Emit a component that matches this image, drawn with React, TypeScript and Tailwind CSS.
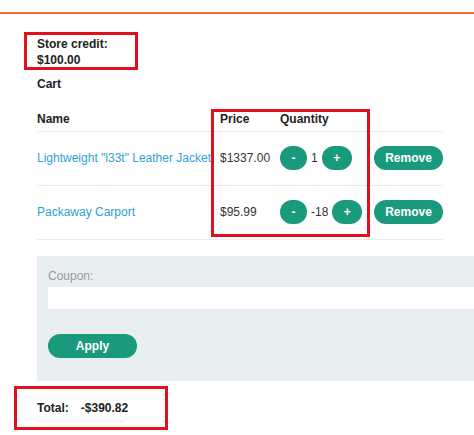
import React from 'react'

const items = [
  { name: 'Lightweight "l33t" Leather Jacket', price: '$1337.00', qty: '1' },
  { name: 'Packaway Carport', price: '$95.99', qty: '-18' },
]

const GreenButton = ({ label, className }: { label: string; className: string }) => (
  <button className={`h-[24px] rounded-full bg-[#1a9a7c] text-[12px] font-bold leading-none text-white ${className}`}>
    {label}
  </button>
)

export default function App() {
  return (
    <div
      className="relative h-[435px] w-[474px] overflow-hidden bg-white text-[12px] text-[#333]"
      style={{ fontFamily: '"Liberation Sans", Arial, sans-serif' }}
    >
      <div className="mt-[12px] h-[2px] bg-[#f0703c]" />

      <div className="pl-[37px]">
        <div className="mt-[22px] font-bold leading-[16px] text-[#222]">
          <div>Store credit:</div>
          <div>$100.00</div>
        </div>
        <div className="mt-[8px] font-bold leading-[16px] text-[#222]">Cart</div>

        <table className="mt-[19px] w-[406px] table-fixed border-collapse">
          <colgroup>
            <col className="w-[183px]" />
            <col className="w-[60px]" />
            <col className="w-[94px]" />
            <col className="w-[69px]" />
          </colgroup>
          <thead>
            <tr className="h-[20px] border-b border-[#ececec] text-left font-bold text-[#222]">
              <th className="p-0 align-top leading-[16px]">Name</th>
              <th className="p-0 align-top leading-[16px]">Price</th>
              <th className="p-0 align-top leading-[16px]">Quantity</th>
              <th className="p-0" />
            </tr>
          </thead>
          <tbody>
            {items.map((item) => (
              <tr key={item.name} className="h-[54px] border-b border-[#ececec]">
                <td className="whitespace-nowrap p-0 text-[#2ea2d6]">{item.name}</td>
                <td className="p-0 text-[#333]">{item.price}</td>
                <td className="p-0">
                  <div className="flex items-center gap-[4px]">
                    <GreenButton label="-" className="w-[27px]" />
                    <span className="text-[#333]">{item.qty}</span>
                    <GreenButton label="+" className="w-[30px]" />
                  </div>
                </td>
                <td className="p-0">
                  <GreenButton label="Remove" className="w-[69px]" />
                </td>
              </tr>
            ))}
          </tbody>
        </table>

        <div className="mt-[16px] h-[125px] bg-[#e9eef1] pl-[11px] pt-[12px]">
          <div className="leading-[16px] text-[#999]">Coupon:</div>
          <div className="mt-[3px] h-[22px] bg-white" />
          <GreenButton label="Apply" className="mt-[25px] w-[89px]" />
        </div>

        <div className="mt-[19px] flex w-[88px] gap-[12px] border-b border-[#eef0f2] pb-[5px] font-bold leading-[16px] text-[#222]">
          <span>Total:</span>
          <span>-$390.82</span>
        </div>
      </div>

      <div className="absolute left-[24px] top-[32px] h-[38px] w-[114px] border-[3px] border-[#e0111c]" />
      <div className="absolute left-[211px] top-[109px] h-[128px] w-[159px] border-[3px] border-[#e0111c]" />
      <div className="absolute left-[14px] top-[386px] h-[44px] w-[154px] border-[3px] border-[#e0111c]" />
    </div>
  )
}
